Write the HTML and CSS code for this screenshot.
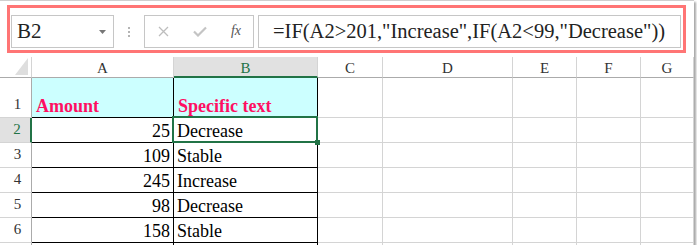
FILE: index.html
```html
<!DOCTYPE html>
<html lang="en">
<head>
    <meta charset="UTF-8">
    <title>Specific text</title>
    <link rel="stylesheet" href="styles.css">
</head>
<body>
<div class="frame">
    <div class="toolbar">
        <div class="bar">
            <div class="namebox">
                <span>B2</span>
                <svg class="arrow" width="7" height="4" viewBox="0 0 7 4"><path d="M0 0H7L3.5 4Z" fill="#777"/></svg>
            </div>
            <div class="dots"><i></i><i></i><i></i></div>
            <div class="buttons">
                <svg width="11" height="11" viewBox="0 0 11 11"><path d="M1 1L10 10M10 1L1 10" stroke="#bdbdbd" stroke-width="1.3"/></svg>
                <svg width="14" height="11" viewBox="0 0 14 11"><path d="M1 5.5L5 9.5L13 1.5" stroke="#c4c4c4" stroke-width="2.2" fill="none"/></svg>
                <span class="fx">fx</span>
            </div>
            <div class="formula">=IF(A2&gt;201,"Increase",IF(A2&lt;99,"Decrease"))</div>
        </div>
    </div>

    <div class="sheet">
        <div class="c h corner"><svg width="13" height="17" viewBox="0 0 13 17"><path d="M13 0V17H0Z" fill="#dedede"/></svg></div>
        <div class="c h">A</div>
        <div class="c h sel">B</div>
        <div class="c h">C</div>
        <div class="c h">D</div>
        <div class="c h">E</div>
        <div class="c h">F</div>
        <div class="c h">G</div>

        <div class="c r">1</div>
        <div class="c b fill title">Amount</div>
        <div class="c b fill title">Specific text</div>
        <div class="c"></div><div class="c"></div><div class="c"></div><div class="c"></div><div class="c"></div>

        <div class="c r rsel">2</div>
        <div class="c b num">25</div>
        <div class="c b active">Decrease</div>
        <div class="c"></div><div class="c"></div><div class="c"></div><div class="c"></div><div class="c"></div>

        <div class="c r">3</div>
        <div class="c b num">109</div>
        <div class="c b">Stable</div>
        <div class="c"></div><div class="c"></div><div class="c"></div><div class="c"></div><div class="c"></div>

        <div class="c r">4</div>
        <div class="c b num">245</div>
        <div class="c b">Increase</div>
        <div class="c"></div><div class="c"></div><div class="c"></div><div class="c"></div><div class="c"></div>

        <div class="c r">5</div>
        <div class="c b num">98</div>
        <div class="c b">Decrease</div>
        <div class="c"></div><div class="c"></div><div class="c"></div><div class="c"></div><div class="c"></div>

        <div class="c r">6</div>
        <div class="c b num">158</div>
        <div class="c b">Stable</div>
        <div class="c"></div><div class="c"></div><div class="c"></div><div class="c"></div><div class="c"></div>

        <div class="c r"></div>
        <div class="c b"></div>
        <div class="c b"></div>
        <div class="c"></div><div class="c"></div><div class="c"></div><div class="c"></div><div class="c"></div>
    </div>
</div>
</body>
</html>
```

FILE: styles.css
```css
body { margin: 0; background: white; font-family: "Liberation Serif", "Times New Roman", "DejaVu Serif", serif; }
.frame { width: 694px; height: 244px; border-top: 1px solid #cfcfcf; overflow: hidden; background: white; box-shadow: 2px 2px 2px #a8a8a8; }

.toolbar { padding: 4px 0 0 7px; }
.bar { width: 670px; height: 33px; border: 3px solid #ff7575; display: flex; align-items: flex-start; padding: 7px 2px 2px 1px; }
.namebox { border: 1px solid #c6c6c6; display: flex; align-items: center; justify-content: space-between; padding: 0 7px 0 5px; box-sizing: border-box; width: 103px; height: 33px; font-size: 21px; color: #222; }
.namebox .arrow { margin-top: 1px; }
.dots { width: 30px; height: 33px; display: flex; flex-direction: column; align-items: center; justify-content: center; gap: 2px; }
.dots i { display: block; width: 2px; height: 2px; background: #b4b4b4; }
.buttons { width: 110px; height: 33px; border: 1px solid #c6c6c6; box-sizing: border-box; display: flex; align-items: center; justify-content: space-between; padding: 0 12px 0 13px; }
.fx { font-style: italic; font-size: 14px; color: #555; margin-top: -1px; }
.formula { flex: 1; height: 33px; margin-left: 4px; border: 1px solid #c6c6c6; box-sizing: border-box; display: flex; align-items: center; padding-left: 14px; font-size: 20.5px; color: #222; white-space: nowrap; }

.sheet { margin-top: 4px; display: grid; grid-template-columns: 32px 142px 144px 65px 130px 64px 64px 1fr; grid-template-rows: 21px 40px 25px 25px 25px 25px 25px 5px; }
.c { box-sizing: border-box; border-right: 1px solid #d4d4d4; border-bottom: 1px solid #d4d4d4; font-size: 18px; line-height: 20px; display: flex; align-items: flex-end; padding: 0 3px 1px 3px; white-space: nowrap; position: relative; }
.h { border-bottom-color: #ababab; justify-content: center; align-items: center; font-size: 15px; color: #333; padding: 2px 0 0 0; }
.corner { justify-content: flex-end; align-items: flex-end; padding: 0 3px 2px 0; }
.h.sel { background: #e1e1e1; color: #217346; border-bottom: 2px solid #217346; }
.r { border-right-color: #ababab; justify-content: center; font-size: 15px; color: #333; padding: 0 0 3px 4px; }
.r.rsel { background: #e1e1e1; color: #217346; border-right: 2px solid #217346; }
.b { border-right-color: #000; border-bottom-color: #000; }
.fill { background: #ccffff; }
.title { font-weight: bold; color: #ff0f62; padding-left: 4px; }
.num { justify-content: flex-end; }
.active::after { content: ""; position: absolute; left: -2px; top: -2px; width: 146px; height: 27px; border: 2px solid #217346; box-sizing: border-box; }
.active::before { content: ""; position: absolute; right: -3px; bottom: -3px; width: 5px; height: 5px; background: #217346; z-index: 1; }
```
